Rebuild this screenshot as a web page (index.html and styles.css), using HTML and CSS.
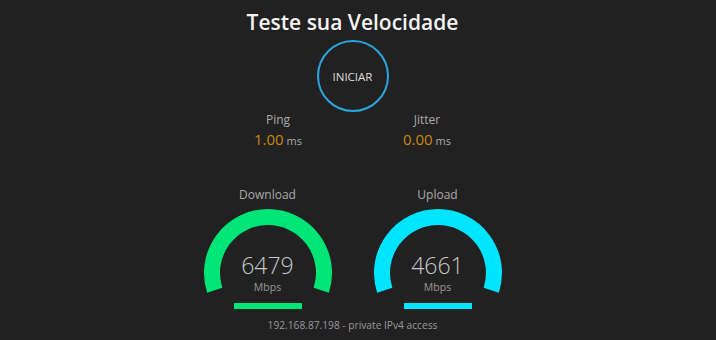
FILE: index.html
```html
<!DOCTYPE html>
<html lang="pt">
<head>
<meta charset="utf-8">
<title>Teste sua Velocidade</title>
<link rel="stylesheet" href="styles.css">
</head>
<body>
<main class="page">
  <h1 class="title">Teste sua Velocidade</h1>
  <div class="start-row">
    <button class="start-btn" type="button">INICIAR</button>
  </div>
  <section class="latency">
    <div class="metric">
      <div class="metric-label">Ping</div>
      <div class="metric-value"><span class="num">1.00</span><span class="unit">ms</span></div>
    </div>
    <div class="metric">
      <div class="metric-label">Jitter</div>
      <div class="metric-value"><span class="num">0.00</span><span class="unit">ms</span></div>
    </div>
  </section>
  <section class="gauges">
    <div class="gauge gauge-dl">
      <div class="gauge-label">Download</div>
      <div class="dial">
        <svg class="dial-svg" width="170" height="94" viewBox="0 0 170 94">
          <path class="arc" d="M31.74 87.30 A56 56 0 1 1 138.26 87.30"/>
        </svg>
        <div class="readout">
          <div class="readout-num">6479</div>
          <div class="readout-unit">Mbps</div>
        </div>
      </div>
      <div class="bar"></div>
    </div>
    <div class="gauge gauge-ul">
      <div class="gauge-label">Upload</div>
      <div class="dial">
        <svg class="dial-svg" width="170" height="94" viewBox="0 0 170 94">
          <path class="arc" d="M31.74 87.30 A56 56 0 1 1 138.26 87.30"/>
        </svg>
        <div class="readout">
          <div class="readout-num">4661</div>
          <div class="readout-unit">Mbps</div>
        </div>
      </div>
      <div class="bar"></div>
    </div>
  </section>
  <div class="ip">192.168.87.198 - private IPv4 access</div>
</main>
</body>
</html>
```
FILE: styles.css
```css
html, body {
  margin: 0;
  padding: 0;
  background: #212121;
}
body {
  font-family: "Open Sans", "DejaVu Sans", sans-serif;
  color: #aaaaaa;
}
.page {
  width: 705px;
  display: flex;
  flex-direction: column;
  align-items: center;
  padding-top: 8px;
}
.title {
  margin: 0;
  font-size: 21px;
  line-height: 28px;
  font-weight: 600;
  color: #f4f4f4;
}
.start-row {
  margin-top: 4px;
  display: flex;
  justify-content: center;
}
.start-btn {
  width: 72px;
  height: 72px;
  margin: 0;
  border-radius: 50%;
  border: 2px solid #2aa6df;
  background: transparent;
  color: #dddddd;
  font-family: "Open Sans", "DejaVu Sans", sans-serif;
  font-size: 11.5px;
  padding: 0;
  box-sizing: border-box;
}
.latency {
  display: flex;
  margin-top: -1px;
}
.metric {
  width: 149px;
  display: flex;
  flex-direction: column;
  align-items: center;
}
.metric-label {
  font-size: 12px;
  line-height: 18px;
  color: #aaaaaa;
}
.metric-value {
  line-height: 20px;
  color: #c98514;
}
.metric-value .num {
  font-size: 15px;
}
.metric-value .unit {
  font-size: 11px;
  margin-left: 3px;
  color: #aaaaaa;
}
.gauges {
  display: flex;
  margin-top: 35px;
}
.gauge {
  width: 170px;
  display: flex;
  flex-direction: column;
  align-items: center;
}
.gauge-label {
  font-size: 12px;
  line-height: 18px;
  color: #aaaaaa;
}
.dial {
  position: relative;
  width: 170px;
  height: 93px;
}
.dial-svg {
  display: block;
  margin-top: -1px;
}
.arc {
  fill: none;
  stroke-width: 16;
  stroke-linecap: butt;
}
.gauge-dl .arc { stroke: #00e676; }
.gauge-ul .arc { stroke: #00e5ff; }
.readout {
  position: absolute;
  left: 0;
  right: 0;
  top: 48px;
  display: flex;
  flex-direction: column;
  align-items: center;
}
.readout-num {
  font-size: 23px;
  line-height: 26px;
  font-weight: 300;
  color: #c8c8c8;
}
.readout-unit {
  font-size: 10.5px;
  line-height: 14px;
  margin-top: 2px;
  color: #999999;
}
.bar {
  width: 68px;
  height: 6px;
  margin-top: 6px;
}
.gauge-dl .bar { background: #00e676; }
.gauge-ul .bar { background: #00e5ff; }
.ip {
  margin-top: 9px;
  font-size: 10.2px;
  line-height: 15px;
  color: #999999;
}
```
